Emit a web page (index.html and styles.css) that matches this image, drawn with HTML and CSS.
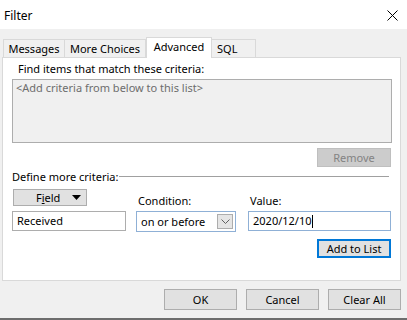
FILE: index.html
```html
<!DOCTYPE html>
<html lang="en">
<head>
    <meta charset="UTF-8">
    <title>Filter</title>
    <link rel="stylesheet" href="styles.css">
</head>
<body>
    <div class="titlebar">
        <span class="title">Filter</span>
        <svg class="close" width="11" height="11" viewBox="0 0 11 11">
            <path d="M0.5 0.5 L10.5 10.5 M10.5 0.5 L0.5 10.5" stroke="#000" stroke-width="1" fill="none"/>
        </svg>
    </div>

    <div class="tabs">
        <div class="tab tab-messages">Messages</div>
        <div class="tab tab-more">More Choices</div>
        <div class="tab tab-active">Advanced</div>
        <div class="tab tab-sql">SQL</div>
    </div>

    <div class="panel">
        <div class="find-label">Find items that match these criteria:</div>
        <div class="criteria-list">&lt;Add criteria from below to this list&gt;</div>
        <div class="remove-row">
            <div class="btn btn-disabled">Remove</div>
        </div>

        <div class="define-row">
            <span>Define more criteria:</span>
            <div class="define-line"></div>
        </div>

        <div class="criteria-grid">
            <div class="btn field-btn">
                <span>F<u>i</u>eld</span>
                <svg width="9" height="5" viewBox="0 0 9 5"><path d="M0 0 H9 L4.5 5 Z" fill="#000"/></svg>
            </div>
            <div class="grid-label">Condition:</div>
            <div class="grid-label">Value:</div>

            <div class="textbox">Received</div>
            <div class="select">
                <span>on or before</span>
                <div class="select-btn">
                    <svg width="9" height="5" viewBox="0 0 9 5"><path d="M0.5 0.5 L4.5 4.5 L8.5 0.5" stroke="#606060" fill="none"/></svg>
                </div>
            </div>
            <div class="textbox textbox-focus">2020/12/10<span class="caret"></span></div>
        </div>

        <div class="add-row">
            <div class="btn btn-default">Add to List</div>
        </div>
    </div>

    <div class="footer">
        <div class="btn footer-btn">OK</div>
        <div class="btn footer-btn">Cancel</div>
        <div class="btn footer-btn">Clear All</div>
    </div>

    <div class="bottom-edge"></div>
</body>
</html>
```

FILE: styles.css
```css
body{
    margin: 0;
    width: 407px;
    height: 320px;
    background-color: #F0F0F0;
    font-family: "Noto Sans", "Open Sans", sans-serif;
    font-size: 11px;
    color: #000;
    overflow: hidden;
}
.titlebar{
    height: 29px;
    background-color: white;
    display: flex;
    align-items: center;
    justify-content: space-between;
    padding: 0 9px 0 4px;
}
.title{
    font-size: 12px;
    margin-top: 1px;
}
.close{
    margin-top: 1px;
}
.tabs{
    display: flex;
    align-items: flex-end;
    height: 20px;
    margin-top: 8px;
    padding-left: 3px;
}
.tab{
    height: 18px;
    line-height: 18px;
    padding: 0;
    text-align: center;
    white-space: nowrap;
    border: 1px solid #D9D9D9;
    border-bottom: 0px;
    box-sizing: border-box;
    background-color: #F0F0F0;
}
.tab + .tab{
    border-left: 0px;
}
.tab-messages{
    width: 62px;
}
.tab-more{
    width: 81px;
}
.tab-active{
    width: 66px;
    height: 21px;
    line-height: 18px;
    background-color: white;
    border-left: 1px solid #D9D9D9 !important;
    margin-bottom: -1px;
    position: relative;
}
.tab-sql{
    width: 44px;
    text-align: left;
    padding-left: 5px;
}
.panel{
    margin: 0 6px 0 2px;
    height: 224px;
    box-sizing: border-box;
    border: 1px solid #D9D9D9;
    background-color: white;
    padding: 3px 8px 0 9px;
}
.find-label{
    padding-left: 6px;
    line-height: 16px;
}
.criteria-list{
    margin-top: 2px;
    height: 64px;
    box-sizing: border-box;
    border: 1px solid #ADADAD;
    background-color: #F0F0F0;
    color: #6D6D6D;
    padding: 1px 3px;
    line-height: 14px;
}
.remove-row, .add-row{
    display: flex;
    justify-content: flex-end;
    padding-right: 1px;
}
.remove-row{
    margin-top: 5px;
}
.btn{
    box-sizing: border-box;
    border: 1px solid #ADADAD;
    background-color: #E1E1E1;
    display: flex;
    align-items: center;
    justify-content: center;
    height: 19px;
    width: 74px;
}
.btn-disabled{
    background-color: #CCCCCC;
    border-color: #BFBFBF;
    color: #838383;
}
.define-row{
    display: flex;
    align-items: center;
    margin-top: 2px;
    height: 14px;
    padding-right: 3px;
}
.define-line{
    flex: 1;
    height: 1px;
    background-color: #A0A0A0;
    margin-left: 1px;
    margin-top: 1px;
}
.criteria-grid{
    display: grid;
    grid-template-columns: 114px 100px 145px;
    grid-template-rows: 24px 20px;
    column-gap: 10px;
    margin-top: 4px;
}
.criteria-grid > :nth-child(3){
    margin-left: 2px;
}
.criteria-grid > :nth-child(6){
    margin-left: 2px;
}
.field-btn{
    height: 17px;
    width: 74px;
    margin-left: 1px;
    margin-top: 2px;
    justify-content: space-between;
    padding: 0 5px 0 22px;
}
.field-btn u{
    text-decoration-thickness: 1px;
}
.grid-label{
    align-self: end;
    line-height: 16px;
    margin-bottom: 2px;
    padding-left: 2px;
}
.textbox{
    height: 20px;
    box-sizing: border-box;
    border: 1px solid #ADADAD;
    background-color: white;
    padding: 0 4px;
    line-height: 18px;
    display: flex;
    align-items: center;
}
.textbox-focus{
    border-color: #8FB0D6;
}
.caret{
    display: inline-block;
    width: 1px;
    height: 13px;
    background-color: #000;
}
.select{
    height: 21px;
    box-sizing: border-box;
    border: 1px solid #8FB0D6;
    background-color: white;
    display: flex;
    align-items: center;
    justify-content: space-between;
    padding: 0 2px 0 4px;
}
.select-btn{
    width: 16px;
    height: 15px;
    box-sizing: border-box;
    border: 1px solid #ADADAD;
    background-color: #E5E5E5;
    display: flex;
    align-items: center;
    justify-content: center;
}
.add-row{
    margin-top: 8px;
}
.btn-default{
    border: 2px solid #0078D7;
    height: 19px;
}
.footer{
    display: flex;
    justify-content: flex-end;
    gap: 9px;
    padding-right: 6px;
    margin-top: 8px;
}
.footer-btn{
    width: 73px;
    height: 21px;
}
.bottom-edge{
    margin-top: 8px;
    height: 2px;
    background-color: #6D6D6D;
}
```
